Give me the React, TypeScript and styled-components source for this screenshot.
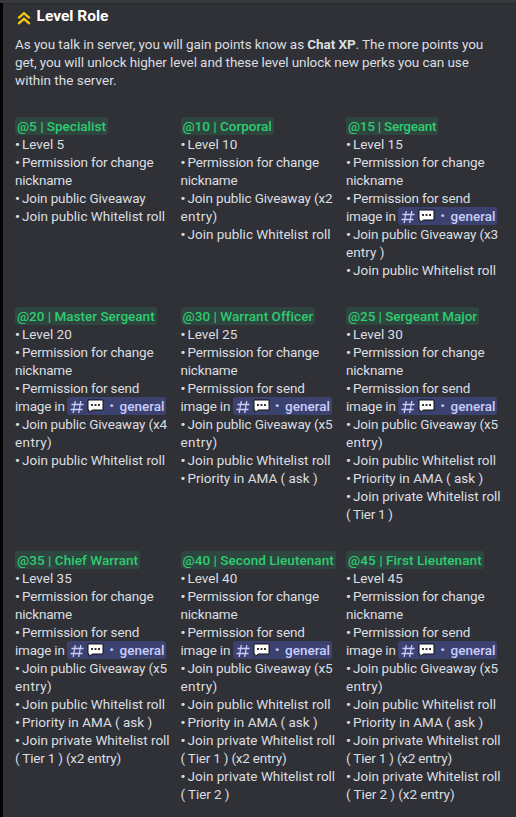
import React from "react";
import styled, { createGlobalStyle } from "styled-components";

const GlobalStyle = createGlobalStyle`
  * { box-sizing: border-box; }
  body { margin: 0; background: #303136; }
`;

const Page = styled.div`
  width: 516px;
  height: 817px;
  overflow: hidden;
  border-top: 3px solid #38393f;
  background: #303136;
  color: #dbdee1;
  font: 400 13.5px/18px Roboto, "Noto Sans", sans-serif;
`;

const Panel = styled.main`
  height: 814px;
  box-shadow: inset 0 1px 0 #292a2e;
  border-left: 3px solid #000;
  padding: 4px 0 0 12px;
`;

const Title = styled.h1`
  display: flex;
  align-items: center;
  gap: 3.5px;
  height: 18px;
  margin: 0 0 10px;
  color: #fff;
  font-size: 15.5px;
  font-weight: 700;
`;

const TitleIcon = styled.svg`
  width: 18px;
  height: 18px;
  margin-top: 4px;
`;

const Intro = styled.div`
  margin: 0 0 28px;
`;

const Line = styled.div<{ $track?: number }>`
  height: 18px;
  white-space: nowrap;
  letter-spacing: ${(p) => p.$track ?? 0}px;
`;

const Grid = styled.section`
  display: grid;
  grid-template-columns: repeat(3, 157.5px);
  column-gap: 8px;
  row-gap: 28px;
`;

const Role = styled.span<{ $track?: number }>`
  display: inline-block;
  height: 18px;
  padding: 0 2px;
  border-radius: 3px;
  background: #2f4640;
  color: #2ecc71;
  font-weight: 500;
  letter-spacing: ${(p) => p.$track ?? 0}px;
`;

const Dot = styled.span`
  display: inline-block;
  width: 7px;
  font-weight: 700;
  letter-spacing: 0;
`;

const Row = styled.div`
  display: flex;
  height: 18px;
  white-space: nowrap;
`;

const Lead = styled.span`
  flex: 0 0 52px;
  letter-spacing: -0.2px;
`;

const Channel = styled.span`
  display: flex;
  align-items: center;
  flex: 0 0 99px;
  height: 18px;
  padding-left: 3px;
  border-radius: 3px;
  background: #3c4270;
  color: #c9cdfb;
  font-weight: 500;
`;

const Hash = styled.svg`
  flex: none;
  width: 14px;
  height: 14px;
  margin: 2px 3px 0 0;
`;

const Bubble = styled.svg`
  flex: none;
  width: 17px;
  height: 14px;
`;

const Separator = styled.span`
  flex: 0 0 15.5px;
  text-align: center;
  font-size: 18px;
  font-weight: 700;
`;

function Mention() {
  return (
    <Row>
      <Lead>image in</Lead>
      <Channel>
        <Hash viewBox="0 0 14 14" fill="none" stroke="#c9cdfb" strokeWidth="1.3">
          <path d="M5.3 1 3.2 13M10.8 1 8.7 13M1.5 4.5h12M.5 9.5h12" />
        </Hash>
        <Bubble viewBox="0 0 17 14">
          <path d="M1 1h15v10H5.5L2 13.4V11H1z" fill="#fff" stroke="#111" strokeLinejoin="round" />
          <path d="M4 5h2v2H4zM7.5 5h2v2h-2zM11 5h2v2h-2z" fill="#333" />
        </Bubble>
        <Separator>·</Separator>
        general
      </Channel>
    </Row>
  );
}

const CHANNEL = "#general";

const TRACK: Record<string, number> = {
  "• Permission for change": -0.19,
  nickname: -0.19,
  "• Permission for send": -0.18,
  "• Join public Giveaway": -0.12,
  "• Join public Giveaway (x2": -0.14,
  "• Join public Giveaway (x3": -0.14,
  "• Join public Giveaway (x4": -0.14,
  "• Join public Giveaway (x5": -0.14,
  "entry)": 0.4,
  "entry )": 0.05,
  "( Tier 1 ) (x2 entry)": -0.2,
  "( Tier 2 ) (x2 entry)": -0.08,
  "( Tier 1 )": -0.3,
  "( Tier 2 )": -0.1,
};

const change = ["• Permission for change", "nickname"];
const send = ["• Permission for send", CHANNEL];
const pub = "• Join public Whitelist roll";
const ama = "• Priority in AMA ( ask )";
const priv = "• Join private Whitelist roll";
const give = (n: number, end = "entry)") => ["• Join public Giveaway (x" + n, end];

const roles: { name: string; track?: number; lines: string[] }[] = [
  { name: "@5 | Specialist", lines: ["• Level 5", ...change, "• Join public Giveaway", pub] },
  { name: "@10 | Corporal", lines: ["• Level 10", ...change, ...give(2), pub] },
  { name: "@15 | Sergeant", track: -0.25, lines: ["• Level 15", ...change, ...send, ...give(3, "entry )"), pub] },
  { name: "@20 | Master Sergeant", lines: ["• Level 20", ...change, ...send, ...give(4), pub] },
  { name: "@30 | Warrant Officer", track: 0.05, lines: ["• Level 25", ...change, ...send, ...give(5), pub, ama] },
  { name: "@25 | Sergeant Major", track: -0.05, lines: ["• Level 30", ...change, ...send, ...give(5), pub, ama, priv, "( Tier 1 )"] },
  { name: "@35 | Chief Warrant", track: 0.05, lines: ["• Level 35", ...change, ...send, ...give(5), pub, ama, priv, "( Tier 1 ) (x2 entry)"] },
  { name: "@40 | Second Lieutenant", track: 0.05, lines: ["• Level 40", ...change, ...send, ...give(5), pub, ama, priv, "( Tier 1 ) (x2 entry)", priv, "( Tier 2 )"] },
  { name: "@45 | First Lieutenant", track: 0.08, lines: ["• Level 45", ...change, ...send, ...give(5), pub, ama, priv, "( Tier 1 ) (x2 entry)", priv, "( Tier 2 ) (x2 entry)"] },
];

function TextLine({ text }: { text: string }) {
  if (text === CHANNEL) return <Mention />;
  const bullet = text.startsWith("• ");
  return (
    <Line $track={TRACK[text]}>
      {bullet && <Dot>•</Dot>}
      {bullet ? text.slice(2) : text}
    </Line>
  );
}

export default function App() {
  return (
    <Page>
      <GlobalStyle />
      <Panel>
        <Title>
          <TitleIcon viewBox="0 0 18 18" fill="none" stroke="#f5cc0b" strokeWidth="2.3">
            <path d="m3.3 9.2 5.7-5 5.7 5M3.3 14.8l5.7-5 5.7 5" />
          </TitleIcon>
          Level Role
        </Title>
        <Intro>
          <Line $track={-0.08}>As you talk in server, you will gain points know as <b>Chat XP</b>. The more points you</Line>
          <Line $track={-0.08}>get, you will unlock higher level and these level unlock new perks you can use</Line>
          <Line>within the server.</Line>
        </Intro>
        <Grid>
          {roles.map((role) => (
            <div key={role.name}>
              <Line><Role $track={role.track}>{role.name}</Role></Line>
              {role.lines.map((text, i) => <TextLine key={i} text={text} />)}
            </div>
          ))}
        </Grid>
      </Panel>
    </Page>
  );
}
